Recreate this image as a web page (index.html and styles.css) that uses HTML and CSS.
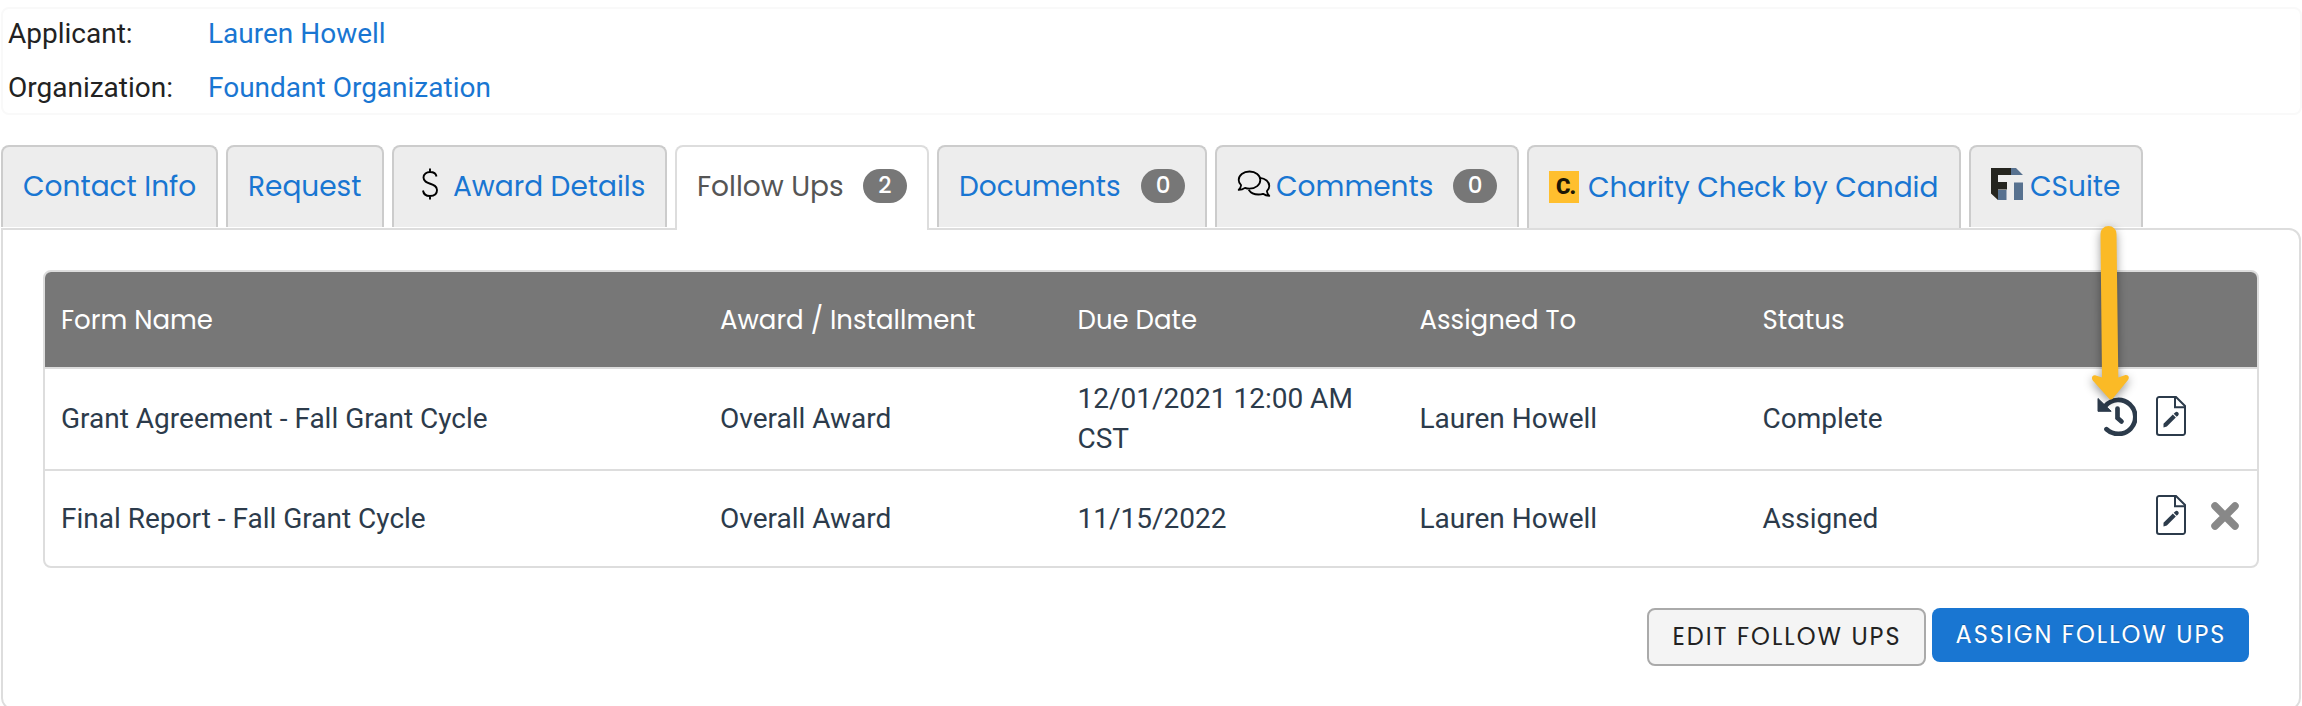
FILE: index.html
```
<!DOCTYPE html>
<html lang="en">
<head>
<meta charset="utf-8">
<title>Follow Ups</title>
<link rel="stylesheet" href="styles.css">
</head>
<body>
<svg class="defs" aria-hidden="true">
  <symbol id="file-edit" viewBox="0 0 30 40">
    <path d="M3.200 1H20l9 9v26.800a2.200 2.200 0 0 1-2.200 2.200H3.200A2.200 2.200 0 0 1 1 36.800V3.200A2.200 2.200 0 0 1 3.200 1Z" fill="#fff" stroke="#2c3b4b" stroke-width="2"/>
    <path d="M19 1v10.200h10" fill="none" stroke="#2c3b4b" stroke-width="2"/>
    <path d="M7.500 31.500v-3.800L16.800 18.600l3 3L10.800 30.600Z" fill="#2c3b4b"/>
    <path d="M17.700 17.800l1.400-1.400a2.100 2.100 0 0 1 3 3l-1.400 1.400Z" fill="#2c3b4b"/>
  </symbol>
</svg>

<section class="summary">
  <div class="summary-row"><span class="summary-label">Applicant:</span><a class="link">Lauren Howell</a></div>
  <div class="summary-row"><span class="summary-label">Organization:</span><a class="link">Foundant Organization</a></div>
</section>

<nav class="tabs">
  <a class="tab tab-contact"><span class="tab-text">Contact Info</span></a>
  <a class="tab tab-request"><span class="tab-text">Request</span></a>
  <a class="tab tab-award">
    <svg class="icon-dollar" viewBox="0 0 16 32" width="16" height="32"><path d="M8 .5V4M8 28v3.500M14.500 8.500C14 5.500 11.500 4 8 4S1.500 6 1.500 9.500c0 8 13.500 4.500 13.500 12.500 0 4-3 6-7 6s-6.500-2-7-5.500" fill="none" stroke="#000" stroke-width="1.900"/></svg>
    <span class="tab-text">Award Details</span>
  </a>
  <a class="tab tab-follow active"><span class="tab-text">Follow Ups</span><span class="badge">2</span></a>
  <a class="tab tab-docs"><span class="tab-text">Documents</span><span class="badge">0</span></a>
  <a class="tab tab-comments">
    <svg class="icon-chat" viewBox="0 0 34 28" width="34" height="28"><path d="M12.500 1.500c6.200 0 10.800 3.700 10.800 8.500s-4.600 8.700-10.800 8.700c-1.600 0-3.200-.3-4.500-.8-1.800 1.400-3.800 2-6.300 2 1.500-1.700 2.300-3.200 2.400-4.700C2.600 13.800 1.700 12 1.700 10c0-4.800 4.600-8.500 10.800-8.500Z" fill="none" stroke="#000" stroke-width="1.800" stroke-linejoin="round"/><path d="M23 7.800c5.300.5 9.300 4 9.300 8.200 0 2-.9 3.800-2.400 5.200.1 1.500.9 3 2.400 4.600-2.500 0-4.500-.7-6.300-2-1.300.5-2.900.7-4.500.7-4.500 0-8-1.900-9.800-4.800" fill="none" stroke="#000" stroke-width="1.800" stroke-linejoin="round"/></svg>
    <span class="tab-text">Comments</span><span class="badge">0</span>
  </a>
  <a class="tab tab-charity"><span class="candid">C.</span><span class="tab-text">Charity Check by Candid</span></a>
  <a class="tab tab-csuite">
    <svg class="icon-ft" viewBox="0 0 32 32" width="32" height="32"><path d="M0 0h20v7H7v7h9v7.500H7V32L0 25.500Z" fill="#25251f"/><path d="M20 0h5l7 7H20ZM7 22h8.500v10H7ZM23 14.500h9V32h-9Z" fill="#57718f"/></svg>
    <span class="tab-text">CSuite</span>
  </a>
</nav>

<main class="panel">
  <div class="grid">
    <div class="row head">
      <span>Form Name</span><span>Award / Installment</span><span>Due Date</span><span>Assigned To</span><span>Status</span>
    </div>
    <div class="row first">
      <span>Grant Agreement - Fall Grant Cycle</span><span>Overall Award</span><span class="date">12/01/2021 12:00 AM CST</span><span>Lauren Howell</span><span>Complete</span>
      <span class="actions">
        <svg class="icon-history" viewBox="0 0 40 40" width="40" height="40"><path d="M8.500 9.800A17 17 0 1 1 9.500 33.200" fill="none" stroke="#2c3b4b" stroke-width="4.700" stroke-linecap="round"/><path d="M1 2.500v12.800h13.200Z" fill="#2c3b4b" stroke="#2c3b4b" stroke-width="1" stroke-linejoin="round"/><path d="M20.500 12.500v9.500l4 3.500" fill="none" stroke="#2c3b4b" stroke-width="4.700" stroke-linecap="round"/></svg>
        <svg class="icon-file" width="30" height="40"><use href="#file-edit"/></svg>
      </span>
    </div>
    <div class="row second">
      <span>Final Report - Fall Grant Cycle</span><span>Overall Award</span><span class="date">11/15/2022</span><span>Lauren Howell</span><span>Assigned</span>
      <span class="actions">
        <svg class="icon-file" width="30" height="40"><use href="#file-edit"/></svg>
        <svg class="icon-x" viewBox="0 0 28 28" width="28" height="28"><path d="M4 4l20 20M24 4L4 24" stroke="#888" stroke-width="7.500" stroke-linecap="round"/></svg>
      </span>
    </div>
  </div>
  <div class="buttons">
    <button class="btn btn-edit">EDIT FOLLOW UPS</button>
    <button class="btn btn-assign">ASSIGN FOLLOW UPS</button>
  </div>
</main>

<svg class="arrow" viewBox="0 0 60 200" width="60" height="200"><path d="M20.500 14a8 8 0 0 1 16 0l1.800 143.500 6.500-2.200c3.200-1 5.200 2 3.200 4.600L33 178.200c-1.300 1.600-3 1.600-4.300 0L12.800 160.400c-2-2.600-.2-5.800 3-4.900l6.200 2Z" fill="#fbba26"/></svg>
</body>
</html>
```
FILE: styles.css
```
* { box-sizing: border-box; }
body {
  margin: 0;
  height: 706px;
  overflow: hidden;
  position: relative;
  background: #fff;
  font-family: Roboto, sans-serif;
  font-size: 28px;
  line-height: 40px;
  color: #222;
}
.defs { display: none; }
svg { display: block; flex: none; }
.link { color: #1976d2; }

.summary {
  margin: 7px 0 0 1px;
  height: 108px;
  padding: 5px 0 0 5px;
  border: 2px solid #f9f9f9;
  border-radius: 8px;
}
.summary-row { display: flex; height: 54px; }
.summary-label { width: 200px; }

.tabs {
  display: flex;
  gap: 8px;
  height: 83px;
  margin: 30px 0 0 1px;
  font-family: Poppins, Inter, sans-serif;
}
.tab {
  display: flex;
  align-items: flex-start;
  flex: none;
  height: 82px;
  padding: 19px 0 0 20px;
  border: 2px solid #ccc;
  border-bottom: 0;
  border-radius: 8px 8px 0 0;
  background: #ededed;
  color: #1976d2;
  white-space: nowrap;
}
.active {
  height: 85px;
  position: relative;
  z-index: 1;
  background: #fff;
  border-color: #ddd;
  color: #555;
}
.tab-contact { width: 217px; }
.tab-request { width: 158px; }
.tab-award { width: 275px; padding-left: 28px; }
.tab-follow { width: 254px; }
.tab-docs { width: 270px; }
.tab-comments { width: 304px; }
.tab-charity { width: 434px; height: 83px; }
.tab-csuite { width: 174px; }
.tab-text { margin-top: 1px; }
.tab-charity .tab-text { margin: 2px 0 0 9px; }
.tab-award .tab-text { margin-left: 15px; }
.tab-comments .tab-text { margin-left: 5px; }
.tab-csuite .tab-text { margin-left: 7px; }
.icon-dollar { margin-top: 2px; }
.icon-chat { margin-top: 4px; }
.icon-ft { margin-top: 2px; }
.badge {
  width: 44px;
  height: 34px;
  margin: 3px 20px 0 auto;
  border-radius: 17px;
  background: #777;
  color: #fff;
  font-size: 23px;
  font-weight: 500;
  line-height: 33px;
  text-align: center;
}
.candid {
  width: 30px;
  height: 32px;
  margin-top: 5px;
  padding-left: 7px;
  background: #ffbf2e;
  color: #1c1705;
  font: 900 22px/32px Roboto, sans-serif;
  letter-spacing: -1px;
}

.panel {
  width: 2300px;
  height: 482px;
  margin-left: 1px;
  padding: 40px 40px 0;
  border: 2px solid #ddd;
  border-radius: 0 12px 12px 12px;
}
.grid {
  width: 2216px;
  height: 298px;
  border: 2px solid #ddd;
  border-radius: 8px;
  overflow: hidden;
  color: #2c3b4b;
}
.row {
  display: grid;
  grid-template-columns: 659px 357.5px 342px 343px 310px 1fr;
  align-items: center;
  padding-left: 16px;
}
.head {
  height: 97px;
  padding-top: 1px;
  background: #777;
  border-bottom: 2px solid #ddd;
  color: #fff;
  font-family: Poppins, Inter, sans-serif;
  font-size: 26px;
}
.first { height: 102px; border-bottom: 2px solid #ddd; }
.second { height: 95px; }
.date { padding-right: 30px; }
.actions { display: flex; align-items: center; }
.first .actions { padding-left: 24.5px; gap: 19px; margin-top: -7px; }
.second .actions { padding-left: 83.5px; gap: 25px; margin-top: -7px; }
.icon-x { margin-top: 2px; }

.buttons {
  display: flex;
  justify-content: flex-end;
  align-items: flex-start;
  gap: 6px;
  padding: 40px 10px 0 0;
}
.btn {
  height: 58px;
  padding: 0 0 0 1px;
  border: 2px solid #aaa;
  border-radius: 8px;
  background: #f4f4f4;
  color: #222;
  font: 24px/30px Poppins, Inter, sans-serif;
  letter-spacing: 2px;
  white-space: nowrap;
}
.btn-edit { width: 279px; }
.btn-assign {
  width: 317px;
  height: 54px;
  border: 0;
  background: #1976d2;
  color: #fff;
  text-shadow: 0 -1px 0 rgba(0, 0, 0, .25);
}
.arrow {
  position: absolute;
  left: 2080px;
  top: 220px;
  filter: drop-shadow(0 3px 5px rgba(0, 0, 0, .4));
}
```
